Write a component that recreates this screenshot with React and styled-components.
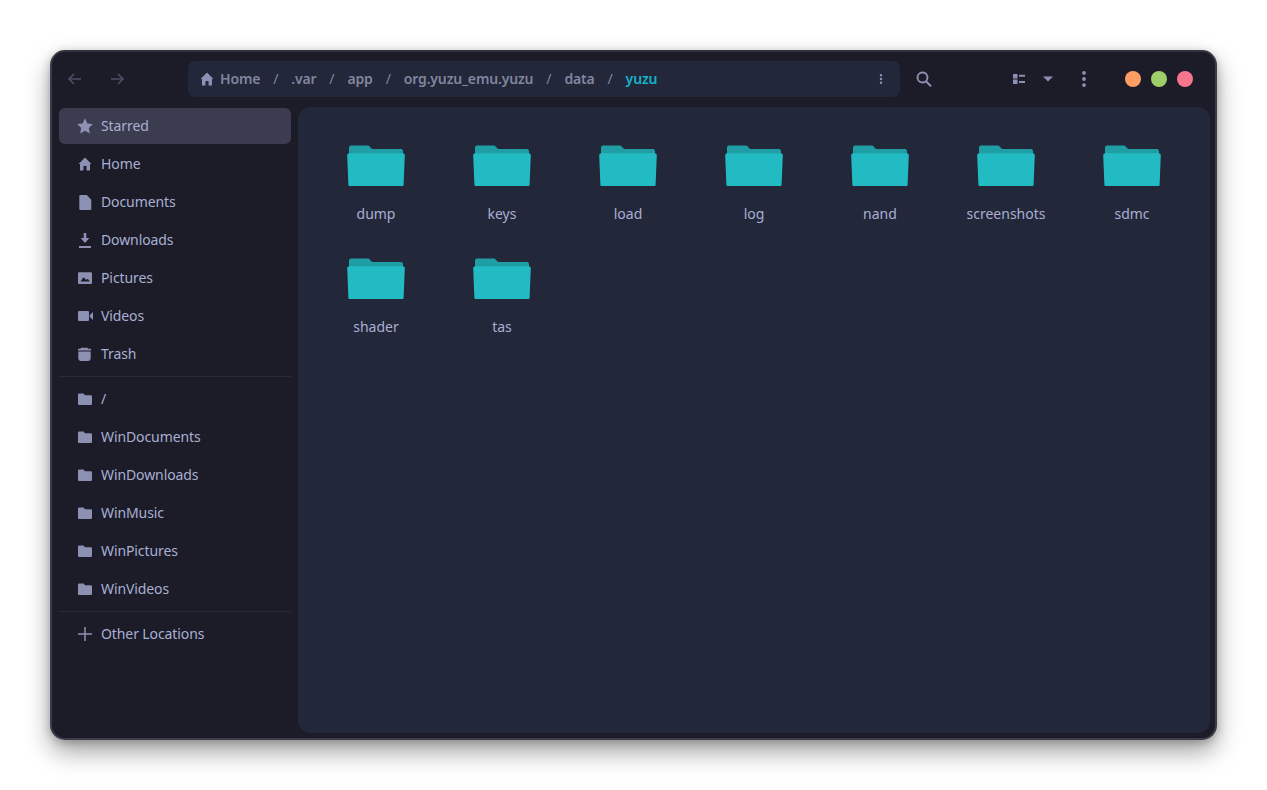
import React from "react";
import styled, { createGlobalStyle } from "styled-components";

const Global = createGlobalStyle`
  html, body { margin: 0; padding: 0; background: #fff; height: 100%; }
  body { font-family: "Noto Sans", "Open Sans", sans-serif; overflow: hidden; }
`;

const Page = styled.div`
  width: 1267px; height: 790px; padding: 50px; box-sizing: border-box;
  display: flex;
`;
const Win = styled.div`
  width: 1167px; height: 690px; box-sizing: border-box;
  background: #1b1c28;
  border: 2px solid #3c3c4c;
  border-top-color: #33333f;
  border-radius: 15px;
  box-shadow: 0 12px 24px rgba(0,0,0,.36), 0 2px 8px rgba(0,0,0,.22);
  display: flex; flex-direction: column;
  overflow: hidden;
`;
const Header = styled.header`
  height: 55px; flex: none; display: flex; align-items: center;
  position: relative;
`;
const NavGroup = styled.div`
  width: 136px; box-sizing: border-box; flex: none; display: flex; align-items: center; padding-left: 13px; gap: 22px;
  margin-top: -1px;
`;
const NavIcon = styled.svg`
  width: 20px; height: 20px; display: block; fill: none; stroke: #4c4e63; stroke-width: 1.7;
`;
const PathBar = styled.div`
  width: 712px; height: 36px; flex: none; background: #222739; border-radius: 7px;
  display: flex; align-items: center; padding: 0 11px 0 11px; box-sizing: border-box;
  margin-top: -1px;
`;
const Crumb = styled.span`
  font-size: 14px; line-height: 18px; font-weight: 600; letter-spacing: -0.15px; padding-bottom: 1px; color: ${p => p.$active ? "#17b3c9" : "#81859f"};
  display: inline-flex; align-items: center; gap: 5px; white-space: nowrap;
`;
const Slash = styled.span`
  font-size: 14px; line-height: 18px; padding-bottom: 1px; color: #81859f; width: 31px; text-align: center; flex: none;
`;
const Spacer = styled.div`flex: 1;`;
const Glyph = styled.svg`
  width: ${p => p.$s || 16}px; height: ${p => p.$s || 16}px; display: block; flex: none; fill: #8c90b3;
`;
const SearchWrap = styled.div`margin-left: 16px; width: 16px; margin-top: -1px;`;
const ViewWrap = styled.div`
  margin-left: 79px; display: flex; align-items: center; gap: 13px; margin-top: -1px;
`;
const MoreWrap = styled.div`margin-left: 20px; margin-top: -1px;`;
const Controls = styled.div`
  margin-left: 33px; display: flex; gap: 10px; margin-top: -1px;
`;
const Dot = styled.span`
  width: 16px; height: 16px; border-radius: 50%; background: ${p => p.$c}; display: block;
`;
const Body = styled.div`
  flex: 1; display: flex; min-height: 0;
`;
const Sidebar = styled.aside`
  width: 246px; flex: none; padding: 1px 7px 0; box-sizing: border-box;
`;
const Row = styled.div`
  height: 36px; box-sizing: border-box; margin-bottom: 2px; border-radius: 6px; display: flex; align-items: center;
  padding-left: 18px; gap: 8px;
  background: ${p => p.$sel ? "#3b3c4f" : "transparent"};
  font-size: 14px; color: #a9afd2;
`;
const RowLabel = styled.span`
  line-height: 18px; letter-spacing: -0.1px;
`;
const Sep = styled.div`
  height: 1px; background: #2b2c3a; margin: 4px 0 4px;
`;
const Main = styled.main`
  flex: 1; background: #222739; border-radius: 12px; margin: 0 5px 5px 0;
  padding: 24px 0 0 15px; box-sizing: border-box;
  display: grid; grid-template-columns: repeat(7, 126px); grid-auto-rows: 113px; align-content: start;
`;
const Item = styled.div`
  display: flex; flex-direction: column; align-items: center;
  font-size: 14px; color: #a9afd2;
`;
const FolderSvg = styled.svg`
  width: 60px; height: 44px; display: block; margin: 11px 0 18px;
`;
const ItemLabel = styled.span`line-height: 20px;`;

const Folder = () => (
  <FolderSvg viewBox="0 0 60 44">
    <path d="M3 5.500a2 2 0 0 1 2-2h16.500c1.200 0 1.800.5 2.400 1.200l1.300 1.600c.5.6 1 .7 1.800.7H55a2 2 0 0 1 2 2V14H3z" fill="#1f9ea6" />
    <path d="M3.200 11.200 H56.800 a2 2 0 0 1 2 2 L57.600 43 a2 2 0 0 1-1.900 1.400 H4.300 a2 2 0 0 1-1.900-1.400 L1.200 13.200 a2 2 0 0 1 2-2z" fill="#22bac3" />
  </FolderSvg>
);

const I = {
  star: <path d="M8 .2l2.400 5.200 5.500.7-4.100 3.800 1.100 5.600L8 12.700l-4.900 2.800 1.100-5.600L.1 6.100l5.500-.7z" />,
  home: <path d="M8 1.500 1.500 8H3v6.500h3.500V10h3v4.500H13V8h1.500L8 1.500z" />,
  doc: <path d="M2.300 2a1 1 0 0 1 1-1h6.500l4.500 4.700V15a1 1 0 0 1-1 1h-10a1 1 0 0 1-1-1z" />,
  down: <path d="M6.700 1h2.600v5H12.400L8 11 3.600 6h3.100zM2 14h12v2H2z" />,
  pic: <path fillRule="evenodd" d="M2 2.300h12a1 1 0 0 1 1 1V13a1 1 0 0 1-1 1H2a1 1 0 0 1-1-1V3.300a1 1 0 0 1 1-1zM3.500 11.500h9.500L10.700 8.800 9.400 9.900 6.500 7.300z" />,
  video: <path d="M2 3h9a1 1 0 0 1 1 1v8a1 1 0 0 1-1 1H2a1 1 0 0 1-1-1V4a1 1 0 0 1 1-1zM12.700 7.300 16 4v8l-3.300-3.300z" />,
  trash: <path d="M4.500 1.700h5.500c.6 0 1 .4 1.200 1H14v1.800H1V2.700h2.300c.2-.6.6-1 1.200-1zM1.300 5.500h12.400V12a3 3 0 0 1-3 3H4.300a3 3 0 0 1-3-3z" />,
  folder: <path d="M1 3.500a1 1 0 0 1 1-1h4.500L8 4.200h6a1 1 0 0 1 1 1V13a1 1 0 0 1-1 1H2a1 1 0 0 1-1-1z" />,
  plus: <path d="M7.250 1h1.500v6.250H15v1.500H8.750V15h-1.500V8.750H1v-1.500h6.250z" />,
  search: <path fillRule="evenodd" d="M6.500.6a5.900 5.900 0 0 1 4.700 9.400l4.500 4.500-1.400 1.400-4.500-4.500A5.900 5.900 0 1 1 6.500.6zm0 1.900a4 4 0 1 0 0 8 4 4 0 0 0 0-8z" />,
  list: <path d="M2 3h4.500v4.500H2zM2 8.500h4.500V13H2zM8 3.700h6v2H8zM8 10h6v2H8z" />,
  caret: <path d="M3 5.500h10L8 10.500z" />,
  dots: <path d="M8 0a1.900 1.900 0 1 1 0 3.800A1.900 1.900 0 0 1 8 0zM8 6.100a1.900 1.900 0 1 1 0 3.800 1.900 1.900 0 0 1 0-3.800zM8 12.200a1.900 1.900 0 1 1 0 3.800 1.900 1.900 0 0 1 0-3.800z" />,
  smallDots: <path d="M8 3a1.250 1.250 0 1 1 0 2.500A1.250 1.250 0 0 1 8 3zM8 6.750a1.250 1.250 0 1 1 0 2.500 1.250 1.250 0 0 1 0-2.500zM8 10.500a1.250 1.250 0 1 1 0 2.500 1.250 1.250 0 0 1 0-2.500z" />,
};
const Ico = ({ n, s }) => <Glyph $s={s} viewBox="0 0 16 16">{I[n]}</Glyph>;

const group1 = [["star", "Starred", true], ["home", "Home"], ["doc", "Documents"], ["down", "Downloads"], ["pic", "Pictures"], ["video", "Videos"], ["trash", "Trash"]];
const group2 = ["/", "WinDocuments", "WinDownloads", "WinMusic", "WinPictures", "WinVideos"];
const crumbs = [".var", "app", "org.yuzu_emu.yuzu", "data"];
const folders = ["dump", "keys", "load", "log", "nand", "screenshots", "sdmc", "shader", "tas"];

export default function App() {
  return (
    <Page>
      <Global />
      <Win>
        <Header>
          <NavGroup>
            <NavIcon viewBox="0 0 20 20"><path d="M16 10H4.500M9 5l-5 5 5 5" /></NavIcon>
            <NavIcon viewBox="0 0 20 20"><path d="M4 10h11.500M11 5l5 5-5 5" /></NavIcon>
          </NavGroup>
          <PathBar>
            <Crumb><Ico n="home" s={16} />Home</Crumb>
            {crumbs.map(c => (
              <React.Fragment key={c}>
                <Slash>/</Slash>
                <Crumb>{c}</Crumb>
              </React.Fragment>
            ))}
            <Slash>/</Slash>
            <Crumb $active>yuzu</Crumb>
            <Spacer />
            <Ico n="smallDots" s={16} />
          </PathBar>
          <SearchWrap><Ico n="search" s={16} /></SearchWrap>
          <ViewWrap><Ico n="list" s={16} /><Ico n="caret" s={16} /></ViewWrap>
          <MoreWrap><Ico n="dots" s={16} /></MoreWrap>
          <Controls>
            <Dot $c="#ff9e64" />
            <Dot $c="#9ece6a" />
            <Dot $c="#f7768e" />
          </Controls>
        </Header>
        <Body>
          <Sidebar>
            {group1.map(([n, t, s]) => <Row key={t} $sel={s}><Ico n={n} /><RowLabel>{t}</RowLabel></Row>)}
            <Sep />
            {group2.map(t => <Row key={t}><Ico n="folder" /><RowLabel>{t}</RowLabel></Row>)}
            <Sep />
            <Row><Ico n="plus" /><RowLabel>Other Locations</RowLabel></Row>
          </Sidebar>
          <Main>
            {folders.map(f => (
              <Item key={f}><Folder /><ItemLabel>{f}</ItemLabel></Item>
            ))}
          </Main>
        </Body>
      </Win>
    </Page>
  );
}
